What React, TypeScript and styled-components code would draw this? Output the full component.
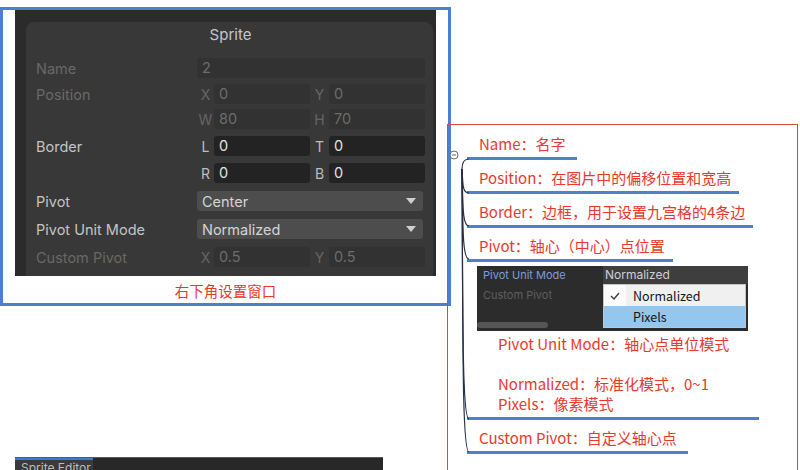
import React from 'react';
import styled, { createGlobalStyle } from 'styled-components';

const GlobalStyle = createGlobalStyle`
  html, body {
    margin:0;
    padding:0;
    background:#fff;
  }
  body {
    width:800px;
    height:470px;
    overflow:hidden;
    font-family: "Noto Sans CJK SC", "Noto Sans", sans-serif;
  }
`

const Canvas = styled.div`
  display:grid;
  grid-template-columns: 447px 353px;
  width:800px;
  height:470px;
  overflow:hidden;
  background:#fff;
`

const LeftColumn = styled.div`
  display:flex;
  flex-direction:column;
  position:relative;
  z-index:1;
`

const Frame = styled.div`
  width:451px;
  box-sizing:border-box;
  margin-top:7px;
  border:3px solid #4b7fd2;
  padding:0 12px 2px 12px;
  display:flex;
  flex-direction:column;
`

const Caption = styled.div`
  margin-top:5px;
  text-align:center;
  color:#e8382c;
  font-size:14.5px;
  line-height:20px;
`

const UnityShot = styled.div`
  height:266px;
  background:#2b2b2b;
  padding:12px 3px 0 11px;
  box-sizing:border-box;
  display:flex;
  overflow:hidden;
  font-family: Inter, "Noto Sans", sans-serif;
`

const InspectorPanel = styled.div`
  flex:1;
  background:#383838;
  border-radius:8px 8px 0 0;
  padding:3px 8px 0 10px;
`

const PanelTitle = styled.div`
  text-align:center;
  color:#c6c6c6;
  font-size:15px;
  line-height:20px;
`

const Row = styled.div<{ $mt: number }>`
  display:flex;
  align-items:center;
  height:20px;
  margin-top:${p => p.$mt}px;
`

const Label = styled.div<{ $dim?: boolean }>`
  width:161px;
  flex:none;
  font-size:14.5px;
  white-space:nowrap;
  color:${p => p.$dim ? '#686868' : '#c4c4c4'};
`

const Fields = styled.div`
  width:228px;
  height:100%;
  display:flex;
  align-items:center;
`

const SubLabel = styled.div<{ $wide?: boolean; $dim?: boolean }>`
  width:${p => p.$wide ? 19 : 17}px;
  flex:none;
  text-align:center;
  font-size:14px;
  color:${p => p.$dim ? '#656565' : '#bdbdbd'};
`

const Input = styled.div<{ $active?: boolean }>`
  flex:1;
  height:100%;
  box-sizing:border-box;
  border-radius:3px;
  padding-left:5px;
  font-size:14.5px;
  line-height:20px;
  background:${p => p.$active ? '#232323' : '#323232'};
  color:${p => p.$active ? '#e2e2e2' : '#6c6c6c'};
`

const Dropdown = styled.div`
  flex:1;
  height:100%;
  margin-right:2px;
  box-sizing:border-box;
  border-radius:3px;
  background:#4d4d4d;
  display:flex;
  align-items:center;
  justify-content:space-between;
  padding:0 7px 0 5px;
  font-size:14.5px;
  color:#d4d4d4;
`

const EditorStrip = styled.div`
  margin-top:151px;
  margin-left:15px;
  width:368px;
  height:20px;
  background:#282828;
  border-top:1px solid #5a5a5a;
  display:flex;
  font-family: Inter, "Noto Sans", sans-serif;
`

const EditorTab = styled.div`
  width:72px;
  background:#3a3a3a;
  border-top:2px solid #3d7bd0;
  color:#bdbdbd;
  font-size:12px;
  line-height:16px;
  padding-left:6px;
  white-space:nowrap;
`

const MindBox = styled.div`
  position:relative;
  z-index:2;
  margin-top:124px;
  margin-right:2px;
  height:360px;
  border:1px solid #d24a45;
  border-bottom:none;
  padding-top:1px;
`

const Connectors = styled.svg`
  position:absolute;
  left:0;
  top:0;
  pointer-events:none;
`

const Node = styled.div<{ $w: number }>`
  width:${p => p.$w}px;
  margin-left:19px;
  box-sizing:border-box;
  border-bottom:3px solid #4f80cf;
  padding:8px 0 3px 12px;
  color:#e8382c;
  font-size:15px;
  line-height:20px;
  white-space:nowrap;
`

const PictureNode = styled(Node)`
  padding-top:4px;
`

const NodeLines = styled.div`
  margin-top:3px;
  padding-left:19px;
`

const NodeLine = styled.div`
  height:20px;
`

const MiniShot = styled.div`
  position:relative;
  width:271px;
  height:65px;
  margin-left:-2px;
  background:#2c2c2c;
  display:grid;
  grid-template-columns:126px 1fr;
  font-family: Inter, "Noto Sans", sans-serif;
`

const MiniLabels = styled.div`
  display:flex;
  flex-direction:column;
`

const MiniLabel = styled.div<{ $selected?: boolean }>`
  height:20px;
  line-height:18px;
  padding-left:6px;
  font-size:11px;
  color:${p => p.$selected ? '#7f9dd6' : '#5e5e5e'};
`

const MiniScroll = styled.div`
  margin-top:auto;
  margin-bottom:3px;
  width:71px;
  height:6px;
  border-radius:3px;
  background:#565656;
`

const MiniHeader = styled.div`
  height:18px;
  line-height:18px;
  background:#3e3e3e;
  color:#d0d0d0;
  font-size:12px;
  padding-left:2px;
`

const Popup = styled.div`
  position:absolute;
  left:126px;
  top:18px;
  width:143px;
  box-sizing:border-box;
  background:#f0f0f0;
  border:1px solid #c4c4c4;
  font-family: "Noto Sans CJK SC", "Noto Sans", sans-serif;
`

const PopupItem = styled.div<{ $hover?: boolean }>`
  display:flex;
  align-items:center;
  height:21px;
  font-size:12.5px;
  color:#151515;
  background:${p => p.$hover ? '#93c7ef' : 'transparent'};
`

const CheckCell = styled.div<{ $blank?: boolean }>`
  width:22px;
  height:100%;
  margin-right:7px;
  display:flex;
  align-items:center;
  justify-content:center;
  background:${p => p.$blank ? 'transparent' : '#fbfbfb'};
`

function Arrow() {
  return (
    <svg width="10" height="6" viewBox="0 0 10 6">
      <polygon points="0,0 10,0 5,6" fill="#cfcfcf" />
    </svg>
  );
}

const branchEnds = [34, 68, 101, 134, 294, 327];

function branchPath(y: number) {
  const ox = 14;
  const oy = 44;
  if (y < oy) return `M ${ox} ${oy} Q ${ox} ${y} 21 ${y}`;
  return `M ${ox} ${oy} C ${ox + 1} ${oy + (y - oy) * 0.6}, ${ox} ${y}, 21 ${y}`;
}

export default function App() {
  return (
    <>
      <GlobalStyle />
      <Canvas>
        <LeftColumn>
          <Frame>
            <UnityShot>
              <InspectorPanel>
                <PanelTitle>Sprite</PanelTitle>
                <Row $mt={13}>
                  <Label $dim>Name</Label>
                  <Fields><Input>2</Input></Fields>
                </Row>
                <Row $mt={6}>
                  <Label $dim>Position</Label>
                  <Fields>
                    <SubLabel $dim>X</SubLabel><Input>0</Input>
                    <SubLabel $dim $wide>Y</SubLabel><Input>0</Input>
                  </Fields>
                </Row>
                <Row $mt={5}>
                  <Label $dim></Label>
                  <Fields>
                    <SubLabel $dim>W</SubLabel><Input>80</Input>
                    <SubLabel $dim $wide>H</SubLabel><Input>70</Input>
                  </Fields>
                </Row>
                <Row $mt={7}>
                  <Label>Border</Label>
                  <Fields>
                    <SubLabel>L</SubLabel><Input $active>0</Input>
                    <SubLabel $wide>T</SubLabel><Input $active>0</Input>
                  </Fields>
                </Row>
                <Row $mt={7}>
                  <Label></Label>
                  <Fields>
                    <SubLabel>R</SubLabel><Input $active>0</Input>
                    <SubLabel $wide>B</SubLabel><Input $active>0</Input>
                  </Fields>
                </Row>
                <Row $mt={8}>
                  <Label>Pivot</Label>
                  <Fields><Dropdown>Center<Arrow /></Dropdown></Fields>
                </Row>
                <Row $mt={8}>
                  <Label>Pivot Unit Mode</Label>
                  <Fields><Dropdown>Normalized<Arrow /></Dropdown></Fields>
                </Row>
                <Row $mt={8}>
                  <Label $dim>Custom Pivot</Label>
                  <Fields>
                    <SubLabel $dim>X</SubLabel><Input>0.5</Input>
                    <SubLabel $dim $wide>Y</SubLabel><Input>0.5</Input>
                  </Fields>
                </Row>
              </InspectorPanel>
            </UnityShot>
            <Caption>右下角设置窗口</Caption>
          </Frame>
          <EditorStrip>
            <EditorTab>Sprite Editor</EditorTab>
          </EditorStrip>
        </LeftColumn>

        <MindBox>
          <Connectors width="352" height="346" viewBox="0 0 352 346">
            {branchEnds.map(y => (
              <path key={y} d={branchPath(y)} fill="none" stroke="#22304a" strokeWidth="1.2" />
            ))}
            <circle cx="6" cy="30" r="4" fill="#fff" stroke="#6a6a6a" strokeWidth="1" />
            <line x1="3.8" y1="30" x2="8.2" y2="30" stroke="#6a6a6a" strokeWidth="1" />
          </Connectors>
          <Node $w={110}>Name：名字</Node>
          <Node $w={272}>Position：在图片中的偏移位置和宽高</Node>
          <Node $w={286}>Border：边框，用于设置九宫格的4条边</Node>
          <Node $w={206}>Pivot：轴心（中心）点位置</Node>
          <PictureNode $w={292}>
            <MiniShot>
              <MiniLabels>
                <MiniLabel $selected>Pivot Unit Mode</MiniLabel>
                <MiniLabel>Custom Pivot</MiniLabel>
                <MiniScroll />
              </MiniLabels>
              <div>
                <MiniHeader>Normalized</MiniHeader>
              </div>
              <Popup>
                <PopupItem>
                  <CheckCell>
                    <svg width="10" height="8" viewBox="0 0 10 8">
                      <polyline points="1,4 4,7 9,1" fill="none" stroke="#3a3a3a" strokeWidth="1.3" />
                    </svg>
                  </CheckCell>
                  Normalized
                </PopupItem>
                <PopupItem $hover>
                  <CheckCell $blank />
                  Pixels
                </PopupItem>
              </Popup>
            </MiniShot>
            <NodeLines>
              <NodeLine>Pivot Unit Mode：轴心点单位模式</NodeLine>
              <NodeLine />
              <NodeLine>Normalized：标准化模式，0~1</NodeLine>
              <NodeLine>Pixels：像素模式</NodeLine>
            </NodeLines>
          </PictureNode>
          <Node $w={221}>Custom Pivot：自定义轴心点</Node>
        </MindBox>
      </Canvas>
    </>
  );
}
